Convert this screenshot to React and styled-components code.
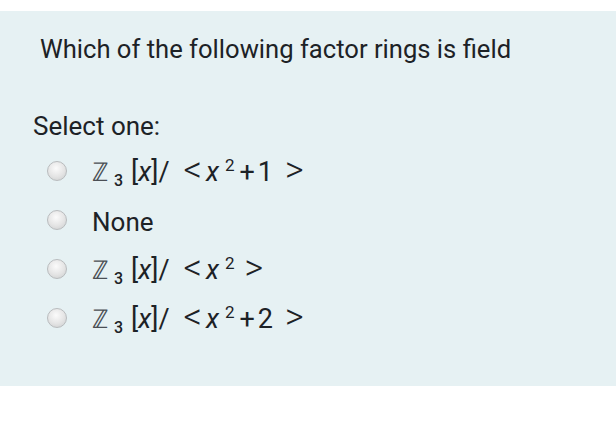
import React from "react";
import styled, { createGlobalStyle } from "styled-components";

const Global = createGlobalStyle`
  html, body { margin: 0; padding: 0; background: #ffffff; }
  body { font-family: Roboto, "Liberation Sans", sans-serif; }
`;

const Page = styled.div`
  width: 616px;
  height: 432px;
  padding-top: 11px;
  box-sizing: border-box;
  background: #ffffff;
`;

const Panel = styled.div`
  height: 375px;
  box-sizing: border-box;
  background: #e6f1f3;
  padding: 22px 0 0 33px;
  display: flex;
  flex-direction: column;
`;

const Question = styled.div`
  font-size: 25.6px;
  line-height: 32px;
  color: #1d2226;
  padding-left: 7px;
`;

const Prompt = styled.div`
  margin-top: 45px;
  font-size: 26px;
  line-height: 32px;
  color: #1d2226;
`;

const Options = styled.div`
  margin-top: 6px;
  display: flex;
  flex-direction: column;
  padding-left: 14px;
`;

const Row = styled.label`
  display: flex;
  align-items: center;
  height: 49px;
  gap: 25px;
  color: #1d2226;
  font-size: 26px;
`;

const Radio = styled.span`
  width: 18px;
  height: 18px;
  border-radius: 50%;
  border: 1px solid #b9bcbe;
  background: radial-gradient(circle at 45% 35%, #fbfbfb 0%, #e4e4e4 55%, #c9cbcc 100%);
  flex: none;
  position: relative;
  top: -2px;
`;

const Expr = styled.span`
  display: inline-flex;
  align-items: baseline;
  white-space: pre;
  font-size: 27px;
  line-height: 32px;
`;

const Set = styled.span`
  font-family: "DejaVu Sans", sans-serif;
  font-weight: 200;
  font-size: 26px;
  color: #4a4f54;
`;

const Sub = styled.span`
  font-size: 16px;
  font-weight: 500;
  position: relative;
  top: 5px;
  margin: 0 8px 0 6px;
`;

const Var = styled.span`
  font-style: italic;
`;

const Sup = styled.span`
  font-size: 17px;
  position: relative;
  top: -10px;
  margin: 0 5px 0 6px;
`;

const Tail = styled.span`
  letter-spacing: 3px;
`;

const Op = styled.span`
  font-size: 36px;
  line-height: 32px;
  font-weight: 300;
  position: relative;
  top: 1px;
  margin-left: ${(p) => p.l || 0}px;
  margin-right: ${(p) => p.r || 0}px;
`;

function Quotient({ tail }) {
  return (
    <Expr>
      <Set>ℤ</Set>
      <Sub>3</Sub>
      [<Var>x</Var>]/
      <Op l={14} r={4}>&lt;</Op>
      <Var>x</Var>
      <Sup>2</Sup>
      {tail && <Tail>{tail}</Tail>}
      <Op l={tail ? 9 : 5}>&gt;</Op>
    </Expr>
  );
}

export default function App() {
  return (
    <>
      <Global />
      <Page>
        <Panel>
          <Question>Which of the following factor rings is field</Question>
          <Prompt>Select one:</Prompt>
          <Options>
            <Row>
              <Radio />
              <Quotient tail="+1" />
            </Row>
            <Row>
              <Radio />
              <span>None</span>
            </Row>
            <Row>
              <Radio />
              <Quotient tail="" />
            </Row>
            <Row>
              <Radio />
              <Quotient tail="+2" />
            </Row>
          </Options>
        </Panel>
      </Page>
    </>
  );
}
